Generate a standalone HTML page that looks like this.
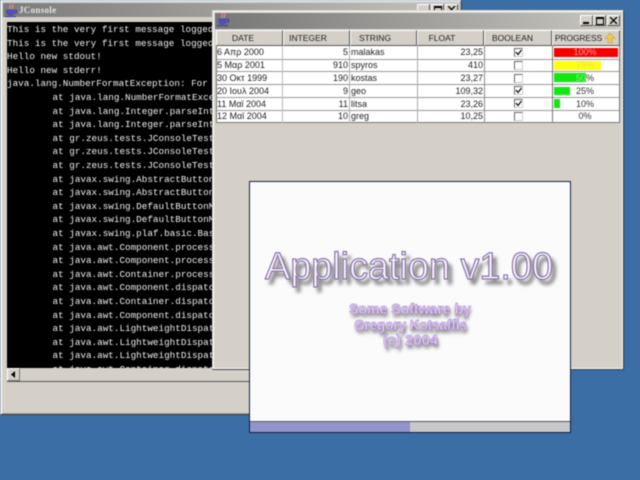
<!DOCTYPE html>
<html><head><meta charset="utf-8">
<style>
html,body{margin:0;padding:0;width:640px;height:480px;overflow:hidden;background:#3a6ea5}
#root{position:relative;width:640px;height:480px;overflow:hidden;font-family:"Liberation Sans","Noto Sans CJK SC",sans-serif;filter:blur(.4px)}
.a{position:absolute}
.win{position:absolute;background:#d4d0c8;box-sizing:border-box;border:1px solid;border-color:#d4d0c8 #404040 #404040 #d4d0c8;box-shadow:inset 1px 1px 0 #fff,inset -1px -1px 0 #a0a0a0}
.btn{position:absolute;width:13px;height:11px;background:#d4d0c8;box-sizing:border-box;border:1px solid;border-color:#fff #505050 #505050 #fff;color:#000}
.l{position:absolute;white-space:pre;color:#f0f0f0;font:9.3px/13px "Liberation Mono",monospace}
.h{position:absolute;top:30px;height:16px;box-sizing:border-box;background:#d4d0c8;border:1px solid;border-color:#fff #555 #555 #fff;font-size:8.5px;line-height:15px;text-align:center;color:#222}
.c{position:absolute;font-size:9px;line-height:13px;color:#222;white-space:pre}
.r{text-align:right}
.cb{position:absolute;width:9px;height:9px;box-sizing:border-box;background:#fff;border:1px solid;border-color:#666 #ccc #ccc #666}
.p{position:absolute;left:554px;height:9px}
.pt{position:absolute;left:552px;width:66px;text-align:center;font-size:9px;line-height:13px;color:#333}
</style></head><body><div id="root">

<!-- console window -->
<div class="win" style="left:0;top:-1px;width:462px;height:416px"></div>
<div class="a" style="left:3px;top:3px;width:456px;height:14px;background:linear-gradient(90deg,#7c7c7c,#c4c2bc)"></div>
<svg class="a" style="left:4px;top:4px" width="14" height="14" viewBox="0 0 14 14"><path d="M6 0c1.500 2-1 3 0 5M8.500 0c1.500 2-1 3 0 5" stroke="#e08890" stroke-width="1.200" fill="none"/><path d="M2 5.500h8.500v3c0 2-2 3-4.200 3S2 10.500 2 8.500z" fill="#5050b0"/><path d="M10.500 6.500h2v2.500h-2M1 12.500h11" stroke="#4040a0" stroke-width="1.200" fill="none"/></svg>
<div class="a" style="left:19px;top:3px;font:bold 9px/14px 'Liberation Serif',serif;color:#e4e4e4;letter-spacing:.3px">JConsole</div>
<div class="btn" style="left:417px;top:4px"></div>
<div class="btn" style="left:431px;top:4px"><div class="a" style="left:2px;top:1px;width:6px;height:5px;border:1px solid #000;border-top-width:2px"></div></div>
<div class="btn" style="left:445px;top:4px"><svg class="a" style="left:2px;top:1px" width="8" height="7"><path d="M0 0l7 7M7 0l-7 7" stroke="#000" stroke-width="1.300"/></svg></div>

<div class="a" style="left:7px;top:22px;width:206px;height:346px;background:#000;overflow:hidden" id="con">
<div class="l" style="left:0;top:1px">This is the very first message logged</div>
<div class="l" style="left:0;top:14.600px">This is the very first message logged</div>
<div class="l" style="left:0;top:28.200px">Hello new stdout!</div>
<div class="l" style="left:0;top:41.800px">Hello new stderr!</div>
<div class="l" style="left:0;top:55.400px">java.lang.NumberFormatException: For input</div>
<div class="l" style="left:45.500px;top:69px">at java.lang.NumberFormatException</div>
<div class="l" style="left:45.500px;top:82.600px">at java.lang.Integer.parseInt</div>
<div class="l" style="left:45.500px;top:96.200px">at java.lang.Integer.parseInt</div>
<div class="l" style="left:45.500px;top:109.800px">at gr.zeus.tests.JConsoleTest</div>
<div class="l" style="left:45.500px;top:123.400px">at gr.zeus.tests.JConsoleTest</div>
<div class="l" style="left:45.500px;top:137px">at gr.zeus.tests.JConsoleTest</div>
<div class="l" style="left:45.500px;top:150.600px">at javax.swing.AbstractButton</div>
<div class="l" style="left:45.500px;top:164.200px">at javax.swing.AbstractButton</div>
<div class="l" style="left:45.500px;top:177.800px">at javax.swing.DefaultButtonModel</div>
<div class="l" style="left:45.500px;top:191.400px">at javax.swing.DefaultButtonModel</div>
<div class="l" style="left:45.500px;top:205px">at javax.swing.plaf.basic.Basic</div>
<div class="l" style="left:45.500px;top:218.600px">at java.awt.Component.process</div>
<div class="l" style="left:45.500px;top:232.200px">at java.awt.Component.process</div>
<div class="l" style="left:45.500px;top:245.800px">at java.awt.Container.process</div>
<div class="l" style="left:45.500px;top:259.400px">at java.awt.Component.dispatch</div>
<div class="l" style="left:45.500px;top:273px">at java.awt.Container.dispatch</div>
<div class="l" style="left:45.500px;top:286.600px">at java.awt.Component.dispatch</div>
<div class="l" style="left:45.500px;top:300.200px">at java.awt.LightweightDispatcher</div>
<div class="l" style="left:45.500px;top:313.800px">at java.awt.LightweightDispatcher</div>
<div class="l" style="left:45.500px;top:327.400px">at java.awt.LightweightDispatcher</div>
<div class="l" style="left:45.500px;top:341px">at java.awt.Container.dispatch</div>
</div>
<!-- console scrollbar -->
<div class="a" style="left:7px;top:368px;width:245px;height:13px;background:#d4d0c8;border-bottom:1px solid #555"></div>
<div class="a" style="left:7px;top:368px;width:13px;height:13px;box-sizing:border-box;background:#d4d0c8;border:1px solid;border-color:#fff #777 #777 #fff"></div>
<svg class="a" style="left:11px;top:371px" width="6" height="8"><path d="M4 0v7L0 3.500z" fill="#000"/></svg>

<!-- table window -->
<div class="win" style="left:212px;top:10px;width:412px;height:360px;box-shadow:inset 1px 1px 0 #fff,inset -1px -1px 0 #fff"></div>
<div class="a" style="left:215px;top:13px;width:406px;height:16px;background:linear-gradient(90deg,#777,#c8c6c0)"></div>
<svg class="a" style="left:216px;top:13px" width="14" height="14" viewBox="0 0 14 14"><path d="M6 0c1.500 2-1 3 0 5M8.500 0c1.500 2-1 3 0 5" stroke="#e08890" stroke-width="1.200" fill="none"/><path d="M2 5.500h8.500v3c0 2-2 3-4.200 3S2 10.500 2 8.500z" fill="#5050b0"/><path d="M10.500 6.500h2v2.500h-2M1 12.500h11" stroke="#4040a0" stroke-width="1.200" fill="none"/></svg>
<div class="btn" style="left:580px;top:15px"><div class="a" style="left:2px;top:6px;width:6px;height:2px;background:#000"></div></div>
<div class="btn" style="left:593px;top:15px"><div class="a" style="left:2px;top:1px;width:6px;height:5px;border:1px solid #000;border-top-width:2px"></div></div>
<div class="btn" style="left:607px;top:15px"><svg class="a" style="left:2px;top:1px" width="8" height="7"><path d="M0 0l7 7M7 0l-7 7" stroke="#000" stroke-width="1.300"/></svg></div>

<!-- table -->
<div class="a" style="left:216px;top:46px;width:404px;height:77px;background:#fff"></div>
<div class="h" style="left:216px;width:67px;padding-right:13px">DATE</div>
<div class="h" style="left:283px;width:67px;padding-right:17px">INTEGER</div>
<div class="h" style="left:350px;width:67px;padding-right:17px">STRING</div>
<div class="h" style="left:417px;width:67px;padding-right:17px">FLOAT</div>
<div class="h" style="left:484px;width:68px;padding-right:11px">BOOLEAN</div>
<div class="h" style="left:552px;width:68px;text-align:left;padding-left:2px;letter-spacing:-.15px">PROGRESS</div>
<svg class="a" style="left:604px;top:32px" width="12" height="12"><path d="M6 1L11 6.500H8V11H4V6.500H1z" fill="#f0c850" stroke="#c8a850" stroke-width=".7"/></svg>

<div class="a" style="left:216px;top:59px;width:404px;height:1px;background:#999"></div>
<div class="a" style="left:216px;top:71px;width:404px;height:1px;background:#999"></div>
<div class="a" style="left:216px;top:84px;width:404px;height:1px;background:#999"></div>
<div class="a" style="left:216px;top:97px;width:404px;height:1px;background:#999"></div>
<div class="a" style="left:216px;top:110px;width:404px;height:1px;background:#999"></div>
<div class="a" style="left:216px;top:122px;width:404px;height:1px;background:#777"></div>
<div class="a" style="left:282px;top:46px;width:1px;height:77px;background:#bbb"></div>
<div class="a" style="left:349px;top:46px;width:1px;height:77px;background:#aaa"></div>
<div class="a" style="left:417px;top:46px;width:1px;height:77px;background:#aaa"></div>
<div class="a" style="left:484px;top:46px;width:1px;height:77px;background:#888"></div>
<div class="a" style="left:552px;top:46px;width:1px;height:77px;background:#777"></div>
<div class="a" style="left:619px;top:46px;width:1px;height:77px;background:#777"></div>
<div class="a" style="left:216px;top:46px;width:1px;height:77px;background:#777"></div>

<div class="c" style="left:217px;top:46px">6 Απρ 2000</div>
<div class="c" style="left:217px;top:59px">5 Μαρ 2001</div>
<div class="c" style="left:217px;top:72px">30 Οκτ 1999</div>
<div class="c" style="left:217px;top:85px">20 Ιουλ 2004</div>
<div class="c" style="left:217px;top:98px">11 Μαϊ 2004</div>
<div class="c" style="left:217px;top:110px">12 Μαϊ 2004</div>

<div class="c r" style="left:300px;width:48px;top:46px">5</div>
<div class="c r" style="left:300px;width:48px;top:59px">910</div>
<div class="c r" style="left:300px;width:48px;top:72px">190</div>
<div class="c r" style="left:300px;width:48px;top:85px">9</div>
<div class="c r" style="left:300px;width:48px;top:98px">11</div>
<div class="c r" style="left:300px;width:48px;top:110px">10</div>

<div class="c" style="left:351px;top:46px">malakas</div>
<div class="c" style="left:351px;top:59px">spyros</div>
<div class="c" style="left:351px;top:72px">kostas</div>
<div class="c" style="left:351px;top:85px">geo</div>
<div class="c" style="left:351px;top:98px">litsa</div>
<div class="c" style="left:351px;top:110px">greg</div>

<div class="c r" style="left:430px;width:53px;top:46px">23,25</div>
<div class="c r" style="left:430px;width:53px;top:59px">410</div>
<div class="c r" style="left:430px;width:53px;top:72px">23,27</div>
<div class="c r" style="left:430px;width:53px;top:85px">109,32</div>
<div class="c r" style="left:430px;width:53px;top:98px">23,26</div>
<div class="c r" style="left:430px;width:53px;top:110px">10,25</div>

<div class="cb" style="left:514px;top:48px"></div>
<div class="cb" style="left:514px;top:61px"></div>
<div class="cb" style="left:514px;top:74px"></div>
<div class="cb" style="left:514px;top:86px"></div>
<div class="cb" style="left:514px;top:99px"></div>
<div class="cb" style="left:514px;top:112px"></div>
<svg class="a" style="left:514px;top:48px" width="9" height="9"><path d="M2 4l2 2.500L7.500 2" stroke="#111" stroke-width="1.300" fill="none"/></svg>
<svg class="a" style="left:514px;top:86px" width="9" height="9"><path d="M2 4l2 2.500L7.500 2" stroke="#111" stroke-width="1.300" fill="none"/></svg>
<svg class="a" style="left:514px;top:99px" width="9" height="9"><path d="M2 4l2 2.500L7.500 2" stroke="#111" stroke-width="1.300" fill="none"/></svg>

<div class="p" style="top:48px;width:64px;background:#f80000"></div>
<div class="p" style="top:61px;width:47px;background:#ffff10"></div>
<div class="p" style="top:73px;width:32px;background:#10e810"></div>
<div class="p" style="top:87px;width:16px;height:8px;background:#10e810"></div>
<div class="p" style="top:99px;width:6px;background:#10e810"></div>
<div class="pt" style="top:46px;color:#f0a0a0">100%</div>
<div class="pt" style="top:59px;color:#e8e050">75%</div>
<div class="pt" style="top:72px"><span style="color:#8fe88f">50</span>%</div>
<div class="pt" style="top:85px">25%</div>
<div class="pt" style="top:98px">10%</div>
<div class="pt" style="top:110px">0%</div>

<!-- splash -->
<div class="a" style="left:249px;top:181px;width:322px;height:252px;box-sizing:border-box;border:1px solid #10204a;background:#fbfbfc"></div>
<div class="a" style="left:250px;top:421px;width:320px;height:1px;background:#556"></div>
<div class="a" style="left:250px;top:422px;width:320px;height:9.500px;background:#c8c8c8"></div>
<div class="a" style="left:250px;top:422px;width:160px;height:9.500px;background:#9494c8"></div>
<svg class="a" style="left:249px;top:181px" width="322" height="240" viewBox="249 181 322 240">
<defs><filter id="b" x="-20%" y="-50%" width="140%" height="200%"><feGaussianBlur stdDeviation="1.800"/></filter></defs>
<g font-family="Liberation Sans, sans-serif">
<text x="269" y="284" font-size="38" textLength="288" lengthAdjust="spacingAndGlyphs" fill="#888" stroke="#888" filter="url(#b)">Application v1.00</text>
<text x="265" y="279" font-size="38" textLength="288" lengthAdjust="spacingAndGlyphs" fill="#f8f2fd" stroke="#8a76a6" stroke-width="1.200">Application v1.00</text>
<g font-size="14.500" font-weight="bold" fill="#555" filter="url(#b)">
<text x="351" y="317" textLength="120" lengthAdjust="spacingAndGlyphs">Some Software by</text>
<text x="356" y="333" textLength="112" lengthAdjust="spacingAndGlyphs">Gregory Kotsaffis</text>
<text x="385" y="348" textLength="54" lengthAdjust="spacingAndGlyphs">(c) 2004</text>
</g>
<g font-size="14.500" font-weight="bold" fill="#e2ccf8" stroke="#9a70c8" stroke-width=".4">
<text x="349" y="314" textLength="122" lengthAdjust="spacingAndGlyphs">Some Software by</text>
<text x="354" y="330" textLength="113" lengthAdjust="spacingAndGlyphs">Gregory Kotsaffis</text>
<text x="383" y="345" textLength="55" lengthAdjust="spacingAndGlyphs">(c) 2004</text>
</g>
</g>
</svg>
</div></body></html>
